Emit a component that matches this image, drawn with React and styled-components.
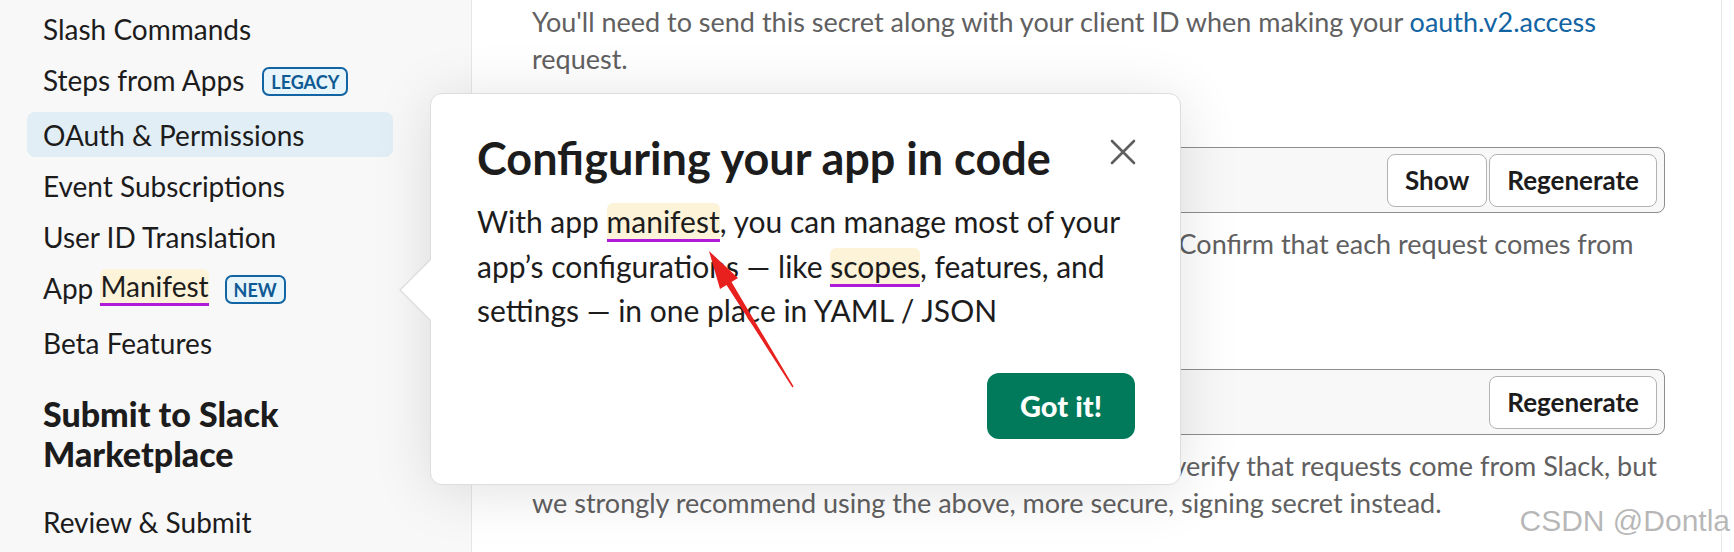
import React from "react";
import styled, { createGlobalStyle } from "styled-components";

const GlobalStyle = createGlobalStyle`
  html, body {
    margin: 0;
    padding: 0;
    background: #fff;
  }
  body {
    font-family: Lato, "Noto Sans", sans-serif;
    color: #1d1c1d;
  }
  #root {
    height: 552px;
    overflow: hidden;
  }
`;

const Page = styled.div`
  position: relative;
  display: flex;
  height: 552px;
  overflow: hidden;
`;

const Sidebar = styled.nav`
  width: 472px;
  flex-shrink: 0;
  box-sizing: border-box;
  padding: 6px 78px 0 27px;
  background: #f8f8f8;
  border-right: 1px solid #e6e6e6;
`;

const NavItem = styled.div`
  display: flex;
  align-items: center;
  height: 45px;
  padding: 0 16px;
  margin-bottom: ${(p) => (p.$badge ? 10 : 6)}px;
  border-radius: 8px;
  font-size: 28px;
  color: #1d1c1d;
  white-space: nowrap;
  background: ${(p) => (p.$active ? "#e2eef6" : "transparent")};
`;

const Badge = styled.span`
  display: inline-flex;
  align-items: center;
  box-sizing: border-box;
  height: 29px;
  margin: 4px 0 0 ${(p) => p.$gap || 16}px;
  padding: 0 7px;
  border: 2px solid #1264a3;
  border-radius: 7px;
  background: #e8f5fa;
  color: #0f5a94;
  font-size: 18px;
  font-weight: 700;
  line-height: 1;
`;

const Mark = styled.span`
  background: #fcf3d9;
  border-bottom: 3px solid #b01ad9;
  border-radius: 6px 6px 0 0;
`;

const SectionHeading = styled.h2`
  margin: 29px 0 0;
  padding-left: 16px;
  font-size: 34px;
  line-height: 40px;
  font-weight: 900;
  color: #1d1c1d;
`;

const SubItem = styled(NavItem)`
  margin-top: 25px;
`;

const Main = styled.main`
  width: 1250px;
  flex-shrink: 0;
  box-sizing: border-box;
  padding: 3px 56px 0 60px;
  border-right: 1px solid #e8e8e8;
`;

const Text = styled.p`
  margin: ${(p) => (p.$helper ? "12px 0 0" : "0")};
  font-size: 27px;
  line-height: 37px;
  color: #616061;
`;

const Link = styled.a`
  color: #1264a3;
  text-decoration: none;
`;

const Label = styled.h3`
  margin: 20px 0 13px;
  font-size: 27px;
  line-height: 37px;
  font-weight: 700;
  color: #1d1c1d;
`;

const Field = styled.div`
  display: flex;
  align-items: center;
  justify-content: flex-end;
  gap: 2px;
  height: 66px;
  box-sizing: border-box;
  padding: 0 7px;
  border: 1px solid #8d8d8d;
  border-radius: 8px;
  background: #f8f8f8;
`;

const FieldButton = styled.button`
  height: 53px;
  padding: 0 17px;
  border: 1.5px solid #b3b3b3;
  border-radius: 8px;
  background: #fff;
  font-family: Lato, sans-serif;
  font-size: 26px;
  font-weight: 700;
  color: #1d1c1d;
`;

const Popover = styled.div`
  position: absolute;
  left: 430px;
  top: 93px;
  width: 751px;
  box-sizing: border-box;
  padding: 40px 45px 45px 46px;
  background: #fff;
  border: 1px solid #dddddd;
  border-radius: 12px;
  box-shadow: 0 6px 60px rgba(0, 0, 0, 0.12);

  &::before,
  &::after {
    content: "";
    position: absolute;
    top: 165px;
    border-style: solid;
    border-color: transparent;
  }
  &::before {
    left: -32px;
    border-width: 32px 32px 32px 0;
    border-right-color: #dddddd;
    top: 164px;
  }
  &::after {
    left: -30px;
    border-width: 31px 31px 31px 0;
    border-right-color: #fff;
  }
`;

const CloseButton = styled.button`
  position: absolute;
  top: 45px;
  right: 44px;
  width: 26px;
  height: 26px;
  padding: 0;
  border: none;
  background: none;
`;

const Title = styled.h1`
  margin: 0;
  padding-right: 60px;
  font-size: 45px;
  line-height: 48px;
  font-weight: 700;
  color: #1d1c1d;
`;

const Body = styled.p`
  margin: 17px 0 0;
  font-size: 30px;
  line-height: 44.5px;
  color: #1d1c1d;
`;

const Footer = styled.div`
  display: flex;
  justify-content: flex-end;
  margin-top: 40px;
`;

const GotIt = styled.button`
  width: 148px;
  height: 66px;
  border: none;
  border-radius: 12px;
  background: #007a5a;
  color: #fff;
  font-family: Lato, sans-serif;
  font-size: 29px;
  font-weight: 900;
`;

const Arrow = styled.svg`
  position: absolute;
  left: 0;
  top: 0;
  pointer-events: none;
`;

const Watermark = styled.div`
  position: absolute;
  right: 4px;
  top: 506px;
  font-family: "Liberation Sans", Arial, sans-serif;
  font-size: 30px;
  line-height: 30px;
  color: rgba(135, 135, 135, 0.6);
  text-shadow: 0 0 1px #fff, 0 0 1px #fff;
  pointer-events: none;
`;

const navItems = [
  { label: "Slash Commands" },
  { label: "Steps from Apps", badge: "LEGACY", gap: 18 },
  { label: "OAuth & Permissions", active: true },
  { label: "Event Subscriptions" },
  { label: "User ID Translation" },
  { label: "App Manifest", badge: "NEW", mark: true },
  { label: "Beta Features" },
];

export default function App() {
  return (
    <>
      <GlobalStyle />
      <Page>
        <Sidebar>
          {navItems.map((item) => (
            <NavItem key={item.label} $active={item.active} $badge={!!item.badge}>
              {item.mark ? (
                <>
                  App&nbsp;<Mark>Manifest</Mark>
                </>
              ) : (
                item.label
              )}
              {item.badge && <Badge $gap={item.gap}>{item.badge}</Badge>}
            </NavItem>
          ))}
          <SectionHeading>
            Submit to Slack
            <br />
            Marketplace
          </SectionHeading>
          <SubItem>Review &amp; Submit</SubItem>
        </Sidebar>

        <Main>
          <Text>
            You'll need to send this secret along with your client ID when making your{" "}
            <Link href="#">oauth.v2.access</Link> request.
          </Text>
          <Label>Signing Secret</Label>
          <Field>
            <FieldButton>Show</FieldButton>
            <FieldButton>Regenerate</FieldButton>
          </Field>
          <Text $helper>
            Slack signs the requests we send you using this secret. Confirm that each request comes from
            Slack by verifying its unique signature.
          </Text>
          <Label>Verification Token</Label>
          <Field>
            <FieldButton>Regenerate</FieldButton>
          </Field>
          <Text $helper>
            This deprecated Verification Token can still be used to verify that requests come from Slack, but
            we strongly recommend using the above, more secure, signing secret instead.
          </Text>
        </Main>

        <Popover>
          <CloseButton aria-label="Close">
            <svg width="26" height="26" viewBox="0 0 26 26">
              <path d="M2 2 L24 24 M24 2 L2 24" stroke="#5e5e5e" strokeWidth="2.6" strokeLinecap="round" />
            </svg>
          </CloseButton>
          <Title>Configuring your app in code</Title>
          <Body>
            With app <Mark>manifest</Mark>, you can manage most of your app’s configurations — like{" "}
            <Mark>scopes</Mark>, features, and settings — in one place in YAML / JSON
          </Body>
          <Footer>
            <GotIt>Got it!</GotIt>
          </Footer>
        </Popover>

        <Arrow width="1734" height="552" viewBox="0 0 1734 552">
          <polygon
            points="709,251 738,278 731.5,282 793.6,386.6 792.4,387.4 726.5,285 720,289"
            fill="#e8201e"
          />
        </Arrow>

        <Watermark>CSDN @Dontla</Watermark>
      </Page>
    </>
  );
}
